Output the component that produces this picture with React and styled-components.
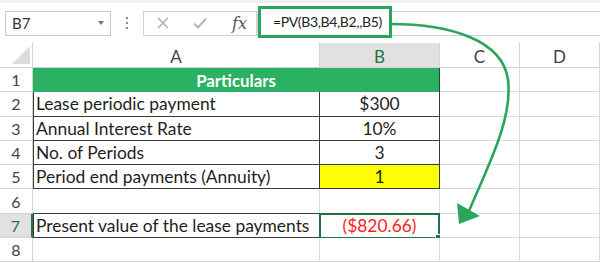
import React from "react";
import styled, { createGlobalStyle } from "styled-components";

const GlobalStyle = createGlobalStyle`
  html, body {
    margin: 0;
    padding: 0;
    background: #fff;
  }
  body {
    font-family: Lato, "Open Sans", sans-serif;
    width: 600px;
    height: 263px;
    overflow: hidden;
  }
`;

const GREEN = "#2aa65c";
const FILL_GREEN = "#2ab163";
const EXCEL_GREEN = "#217346";
const GRID = "#dadada";
const DARK = "#3a3a3a";

const rows = [
  { n: 1, kind: "title", a: "Particulars" },
  { n: 2, kind: "data", a: "Lease periodic payment", b: "$300" },
  { n: 3, kind: "data", a: "Annual Interest Rate", b: "10%" },
  { n: 4, kind: "data", a: "No. of Periods", b: "3" },
  { n: 5, kind: "data", a: "Period end payments (Annuity)", b: "1", yellow: true },
  { n: 6, kind: "gap" },
  { n: 7, kind: "result", a: "Present value of the lease payments", b: "($820.66)" },
  { n: 8, kind: "empty" },
];

const Page = styled.div`
  position: relative;
  width: 600px;
  height: 263px;
  overflow: hidden;
  background: #fff;
`;

const Toolbar = styled.div`
  height: 43px;
  box-sizing: border-box;
  display: flex;
  align-items: center;
  padding-left: 5px;
  border-top: 3px solid #f0f0f0;
`;

const NameBox = styled.div`
  width: 106px;
  height: 25px;
  box-sizing: border-box;
  border: 1px solid #c9c9c9;
  display: flex;
  align-items: center;
  justify-content: space-between;
  padding: 0 6px 0 6px;
  font-size: 15px;
  color: #333;
`;

const Caret = styled.span`
  width: 0;
  height: 0;
  border-left: 3.5px solid transparent;
  border-right: 3.5px solid transparent;
  border-top: 4px solid #777;
`;

const Dots = styled.div`
  width: 32px;
  display: flex;
  flex-direction: column;
  align-items: center;
  gap: 3px;
  span {
    width: 2px;
    height: 2px;
    background: #888;
  }
`;

const FuncBox = styled.div`
  width: 114px;
  height: 25px;
  box-sizing: border-box;
  border: 1px solid #d3d3d3;
  display: flex;
  align-items: center;
  padding-left: 12px;
  gap: 22px;
`;

const Fx = styled.span`
  font-family: "DejaVu Serif", "Liberation Serif", serif;
  font-style: italic;
  font-size: 16px;
  color: #555;
  margin-left: 2px;
`;

const FormulaInput = styled.div`
  flex: 1;
  height: 25px;
  box-sizing: border-box;
  border: 1px solid #d3d3d3;
  border-right: none;
  display: flex;
  align-items: center;
`;

const Highlight = styled.div`
  width: 134px;
  height: 32px;
  box-sizing: border-box;
  margin: -1px 0 2px 0;
  border: 3px solid ${GREEN};
  background: #fff;
  display: flex;
  align-items: center;
  padding-left: 12px;
  font-size: 14px;
  letter-spacing: -0.35px;
  color: #222;
  white-space: nowrap;
`;

const Sheet = styled.div`
  display: grid;
  grid-template-columns: 33px 287px 120px 80px 80px;
  grid-template-rows: 25px;
  grid-auto-rows: 24.3px;
`;

const ColHead = styled.div`
  box-sizing: border-box;
  display: flex;
  align-items: center;
  justify-content: center;
  font-size: 17px;
  color: ${(p) => (p.$selected ? EXCEL_GREEN : "#444")};
  background: ${(p) => (p.$selected ? "#e1e1e1" : "#fff")};
  border-right: 1px solid #d4d4d4;
  border-bottom: 1px solid #d4d4d4;
  padding-top: 2px;
`;

const Corner = styled.div`
  box-sizing: border-box;
  border-right: 1px solid #d4d4d4;
  border-bottom: 1px solid #d4d4d4;
  display: flex;
  align-items: flex-end;
  justify-content: flex-end;
  padding: 0 2px 3px 0;
  span {
    width: 0;
    height: 0;
    border-left: 18px solid transparent;
    border-bottom: 18px solid #dcdcdc;
  }
`;

const RowHead = styled.div`
  box-sizing: border-box;
  display: flex;
  align-items: center;
  justify-content: center;
  font-size: 16px;
  color: ${(p) => (p.$selected ? EXCEL_GREEN : "#444")};
  background: ${(p) => (p.$selected ? "#e1e1e1" : "#fff")};
  border-bottom: 1px solid #d4d4d4;
  border-right: ${(p) => (p.$selected ? `2px solid ${EXCEL_GREEN}` : "1px solid #d4d4d4")};
`;

const Cell = styled.div`
  position: relative;
  box-sizing: border-box;
  display: flex;
  align-items: center;
  justify-content: ${(p) => (p.$center ? "center" : "flex-start")};
  padding-left: ${(p) => (p.$center ? "0" : "3px")};
  font-size: 17.4px;
  white-space: nowrap;
  color: ${(p) => p.$color || "#1e1e1e"};
  background: ${(p) => p.$bg || "#fff"};
  border-right: 1px solid ${(p) => (p.$darkRight ? DARK : GRID)};
  border-bottom: ${(p) => (p.$darkBottom ? `1.5px solid ${DARK}` : `1px solid ${GRID}`)};
  box-shadow: ${(p) => (p.$darkLeft ? `inset 1px 0 0 ${DARK}` : "none")};
`;

const TitleCell = styled.div`
  grid-column: span 2;
  box-sizing: border-box;
  display: flex;
  align-items: center;
  justify-content: center;
  background: ${FILL_GREEN};
  color: #fff;
  font-weight: 700;
  font-size: 16.8px;
  border-right: 1px solid ${DARK};
`;

const Selection = styled.div`
  position: absolute;
  inset: -1px -1px -1.5px -1px;
  border: 2px solid ${EXCEL_GREEN};
  pointer-events: none;
  &::after {
    content: "";
    position: absolute;
    right: -4px;
    bottom: -4px;
    width: 5px;
    height: 5px;
    background: ${EXCEL_GREEN};
    border: 1px solid #fff;
  }
`;

const Arrow = styled.svg`
  position: absolute;
  left: 0;
  top: 0;
  pointer-events: none;
`;

function Row({ row }) {
  if (row.kind === "title") {
    return (
      <>
        <TitleCell>{row.a}</TitleCell>
        <Cell />
        <Cell />
      </>
    );
  }
  if (row.kind === "data") {
    return (
      <>
        <Cell $darkLeft $darkRight $darkBottom>{row.a}</Cell>
        <Cell $center $darkRight $darkBottom $bg={row.yellow ? "#ffff00" : undefined}>
          {row.b}
        </Cell>
        <Cell />
        <Cell />
      </>
    );
  }
  if (row.kind === "gap") {
    return (
      <>
        <Cell $darkBottom />
        <Cell $darkBottom />
        <Cell />
        <Cell />
      </>
    );
  }
  if (row.kind === "result") {
    return (
      <>
        <Cell $darkLeft $darkRight $darkBottom>{row.a}</Cell>
        <Cell $center $darkBottom $color="#ff2020">
          {row.b}
          <Selection />
        </Cell>
        <Cell />
        <Cell />
      </>
    );
  }
  return (
    <>
      <Cell />
      <Cell />
      <Cell />
      <Cell />
    </>
  );
}

export default function App() {
  return (
    <Page>
      <GlobalStyle />
      <Toolbar>
        <NameBox>
          B7
          <Caret />
        </NameBox>
        <Dots>
          <span />
          <span />
          <span />
        </Dots>
        <FuncBox>
          <svg width="14" height="14" viewBox="0 0 14 14">
            <path d="M2 2 L12 12 M12 2 L2 12" stroke="#b5b5b5" strokeWidth="1.6" fill="none" />
          </svg>
          <svg width="16" height="14" viewBox="0 0 16 14">
            <path d="M2 7.5 L6 11.5 L14 2.5" stroke="#b5b5b5" strokeWidth="2" fill="none" />
          </svg>
          <Fx>fx</Fx>
        </FuncBox>
        <FormulaInput>
          <Highlight>=PV(B3,B4,B2,,B5)</Highlight>
        </FormulaInput>
      </Toolbar>

      <Sheet>
        <Corner>
          <span />
        </Corner>
        <ColHead>A</ColHead>
        <ColHead $selected>B</ColHead>
        <ColHead>C</ColHead>
        <ColHead>D</ColHead>
        {rows.map((row) => (
          <React.Fragment key={row.n}>
            <RowHead $selected={row.n === 7}>{row.n}</RowHead>
            <Row row={row} />
          </React.Fragment>
        ))}
      </Sheet>

      <Arrow width="600" height="263" viewBox="0 0 600 263">
        <path
          d="M390 24 C450 24 503 40 508 80 C513 120 486 170 469 211"
          stroke={GREEN}
          strokeWidth="2.6"
          fill="none"
        />
        <polygon points="459,224 457,203 480,216" fill={GREEN} />
      </Arrow>
    </Page>
  );
}
